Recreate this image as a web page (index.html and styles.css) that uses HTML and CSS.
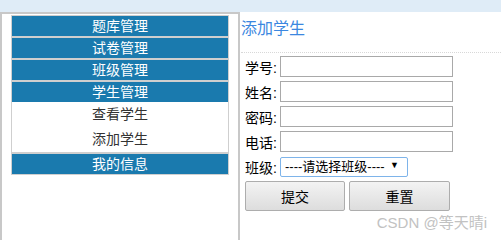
FILE: index.html
```html
<!DOCTYPE html>
<html lang="zh-CN">
<head>
    <meta charset="UTF-8">
    <title>添加学生</title>
    <link rel="stylesheet" href="styles.css">
</head>
<body>
    <div class="top-bar"></div>
    <div class="layout">
        <div class="sidebar">
            <div class="menu-block"><div class="menu-title">题库管理</div></div>
            <div class="menu-block"><div class="menu-title">试卷管理</div></div>
            <div class="menu-block"><div class="menu-title">班级管理</div></div>
            <div class="menu-block">
                <div class="menu-title">学生管理</div>
                <a class="menu-item" href="#">查看学生</a>
                <a class="menu-item" href="#">添加学生</a>
            </div>
            <div class="menu-block"><div class="menu-title">我的信息</div></div>
        </div>

        <div class="main">
            <h2 class="page-title">添加学生</h2>
            <form class="student-form">
                <div class="form-row">
                    <label>学号:</label>
                    <input type="text" class="text-input">
                </div>
                <div class="form-row">
                    <label>姓名:</label>
                    <input type="text" class="text-input">
                </div>
                <div class="form-row">
                    <label>密码:</label>
                    <input type="password" class="text-input">
                </div>
                <div class="form-row">
                    <label>电话:</label>
                    <input type="text" class="text-input">
                </div>
                <div class="form-row">
                    <label>班级:</label>
                    <div class="select-wrap">
                        <select class="class-select">
                            <option>----请选择班级----</option>
                        </select>
                    </div>
                </div>
                <div class="form-buttons">
                    <button type="button" class="btn">提交</button>
                    <button type="reset" class="btn btn-reset">重置</button>
                </div>
            </form>
            <div class="watermark">CSDN @等天晴i</div>
        </div>
    </div>
</body>
</html>
```

FILE: styles.css
```css
/* Reset */
body, h2, div, a, form, label, input, select, button {
    margin: 0;
    padding: 0;
    font-family: "Liberation Sans", "Noto Sans CJK SC", sans-serif;
}

body {
    width: 501px;
    height: 240px;
    overflow: hidden;
    background-color: #ffffff;
}

/* Top bar */
.top-bar {
    height: 12px;
    background-color: #dfecf7;
}

.layout {
    display: flex;
    height: 228px;
}

/* Sidebar menu */
.sidebar {
    width: 218px;
    padding: 1px 9px 0 9px;
    border-top: 2px solid #c8c8c8;
    border-left: 2px solid #c8c8c8;
    border-right: 2px solid #c8c8c8;
}

.menu-block {
    border: 1px solid #cfcfcf;
}

.menu-title {
    height: 20px;
    line-height: 20px;
    background-color: #1a7aae;
    color: #ffffff;
    font-size: 14px;
    text-align: center;
}

.menu-item {
    display: block;
    height: 25px;
    line-height: 25px;
    font-size: 14px;
    color: #333333;
    text-align: center;
    text-decoration: none;
}

/* Main area */
.main {
    position: relative;
    flex: 1;
    padding-left: 1px;
}

.page-title {
    padding: 7px 0 13px 0;
    line-height: 20px;
    font-size: 16px;
    font-weight: normal;
    color: #3b87e0;
    border-bottom: 1px dotted #d8d8d8;
}

.student-form {
    padding: 3px 0 0 4px;
}

.form-row {
    display: flex;
    align-items: center;
    height: 21px;
    margin-bottom: 4px;
}

.form-row label {
    width: 35px;
    font-size: 14px;
    color: #000000;
}

.text-input {
    width: 173px;
    height: 21px;
    box-sizing: border-box;
    border: 1px solid #a9a9a9;
    outline: none;
}

.select-wrap {
    position: relative;
}

.class-select {
    width: 128px;
    height: 20px;
    box-sizing: border-box;
    padding-left: 4px;
    border: 1px solid #7eb4ea;
    border-radius: 2px;
    background-color: #ffffff;
    font-size: 13px;
    color: #000000;
    -webkit-appearance: none;
    appearance: none;
    outline: none;
}

.select-wrap::after {
    content: "\25BC";
    position: absolute;
    right: 9px;
    top: 3px;
    font-size: 9px;
    color: #000000;
    pointer-events: none;
}

/* Buttons */
.form-buttons {
    display: flex;
    gap: 4px;
}

.btn {
    width: 100px;
    height: 30px;
    border: 1px solid #adadad;
    border-radius: 2px;
    background: linear-gradient(#f3f3f3, #dddddd);
    font-size: 14px;
    color: #000000;
}

.btn-reset {
    width: 101px;
}

/* Watermark */
.watermark {
    position: absolute;
    right: 14px;
    bottom: 8px;
    font-size: 15px;
    color: #c2c2c2;
}
```
